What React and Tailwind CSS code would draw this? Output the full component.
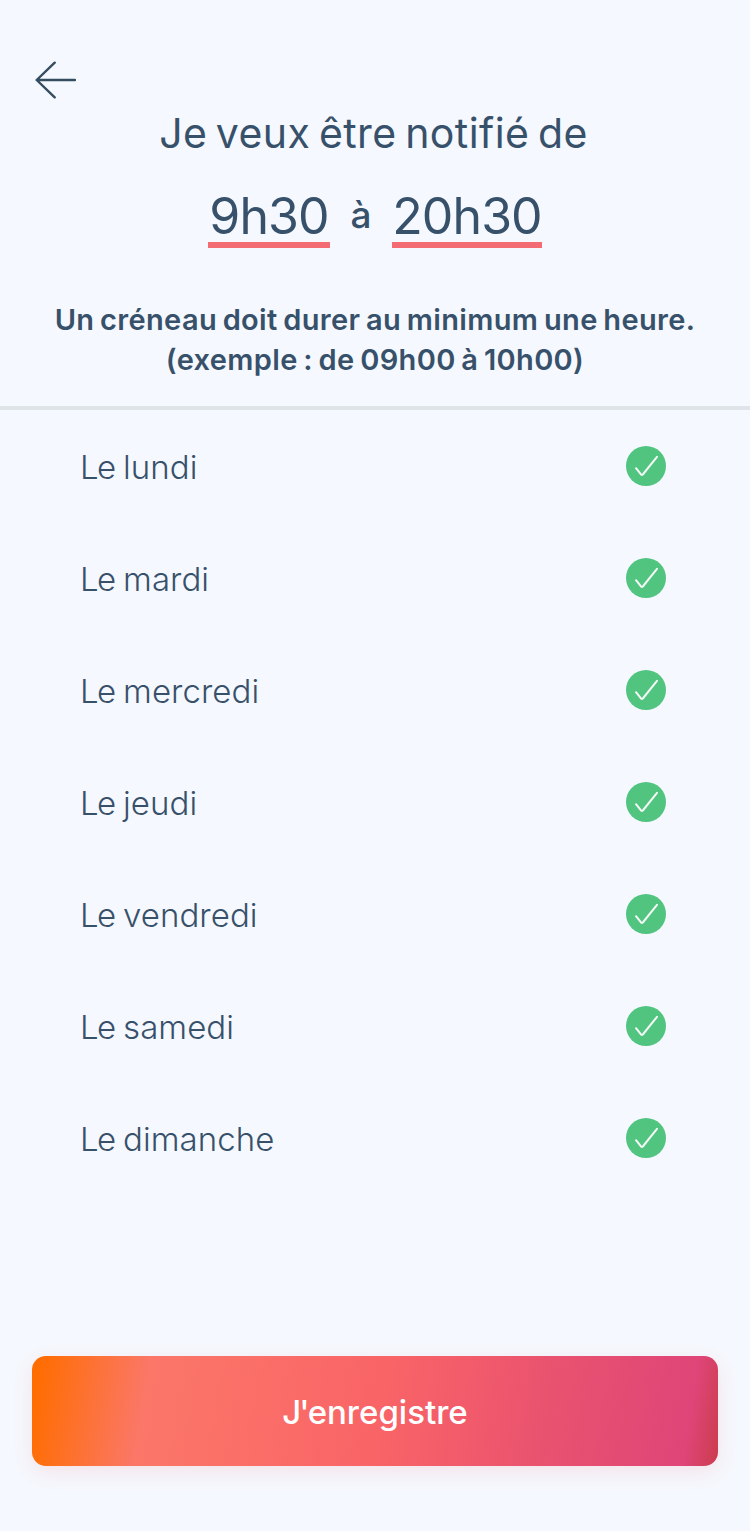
const days = ['lundi', 'mardi', 'mercredi', 'jeudi', 'vendredi', 'samedi', 'dimanche'];

function BackArrow() {
  return (
    <svg className="block h-10 w-11" viewBox="0 0 44 40" fill="none" stroke="currentColor" strokeWidth="2.4" strokeLinecap="round" strokeLinejoin="round">
      <path d="M22.7 2.7 4.7 20l18 17.3M4.7 20H43" />
    </svg>
  );
}

function CheckBadge() {
  return (
    <svg className="block size-10" viewBox="0 0 40 40" fill="none">
      <circle cx="20" cy="20" r="20" fill="#51c480" />
      <path d="M10 22.2 15.2 28.6Q16 29.3 16.8 28.5L31 10.8" stroke="#f4fbf7" strokeWidth="2" strokeLinecap="round" strokeLinejoin="round" />
    </svg>
  );
}

function TimeField({ children, className }) {
  return (
    <button className={`h-[60px] border-b-6 border-[#f36b73] text-[50px] leading-[56px] font-[430] tracking-[-0.9px] whitespace-nowrap ${className}`}>
      {children}
    </button>
  );
}

export default function App() {
  return (
    <main className="flex h-[1531px] w-[750px] flex-col overflow-hidden bg-[#f5f8fe] font-['Inter',sans-serif] text-[#38516b]">
      <header className="flex h-[410px] shrink-0 flex-col border-b-4 border-[#dfe4e9] pt-[60px]">
        <button className="ml-8 h-10 w-11 text-[#344b60]" aria-label="Retour">
          <BackArrow />
        </button>
        <h1 className="mt-[7px] h-[53px] pr-[3px] text-center text-[41px] leading-[52px] font-[430] tracking-[0.45px] [word-spacing:-3.5px] whitespace-nowrap">
          Je veux être notifié de
        </h1>
        <div className="mt-7 flex h-[60px] justify-center">
          <TimeField className="w-[122px]">9h30</TimeField>
          <span className="w-[62px] text-center text-[37px] leading-[54px] font-[450]">à</span>
          <TimeField className="w-[150px]">20h30</TimeField>
        </div>
        <p className="mt-[52px] text-center text-[29px] leading-10 font-semibold tracking-[0.35px] [word-spacing:-2px] whitespace-nowrap">
          Un créneau doit durer au minimum une heure.
          <br />
          (exemple : de 09h00 à 10h00)
        </p>
      </header>
      <ul className="flex flex-col">
        {days.map((day) => (
          <li key={day} className="flex h-28 items-center justify-between pr-[84px] pl-20">
            <span className="pt-0.5 text-[33px] leading-10 font-[330] tracking-[0.05px] [word-spacing:-2.4px] whitespace-nowrap">
              <span className="tracking-[-1.7px]">L</span>e {day}
            </span>
            <CheckBadge />
          </li>
        ))}
      </ul>
      <button className="mx-8 mt-auto mb-[65px] h-[110px] shrink-0 rounded-[14px] bg-[linear-gradient(99deg,#ff6d00_1%,#fb7768_17%,#f96467_51%,#e9526f_75%,#df4578_95%,#cb3c4c_100%)] pt-0.5 text-[33px] leading-[108px] font-[450] text-white shadow-[0_6px_20px_rgba(250,80,80,0.12)]">
        <span className="tracking-[-2px]">J'</span>
        <span>enregistre</span>
      </button>
    </main>
  );
}
